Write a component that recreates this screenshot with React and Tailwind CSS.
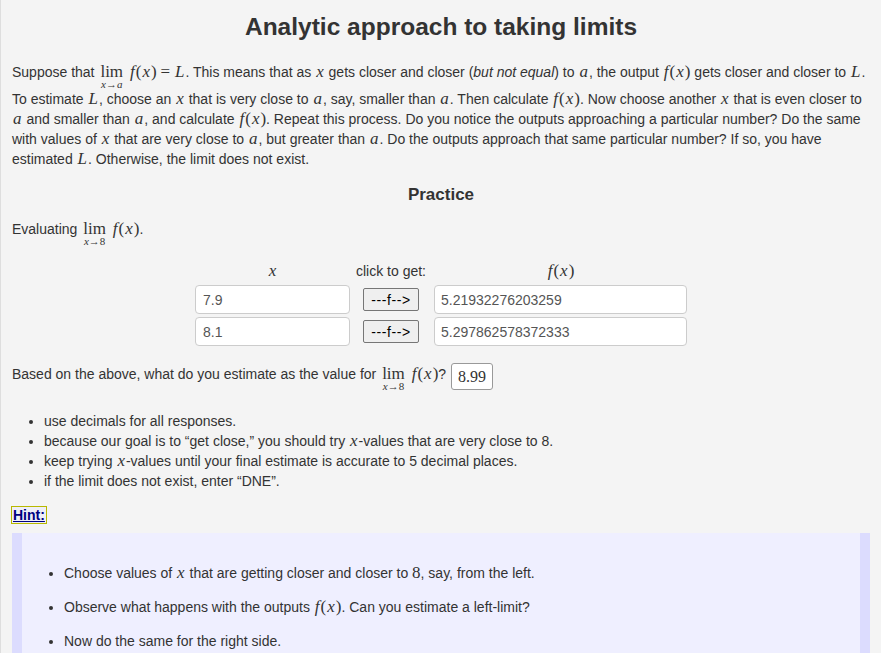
import React from "react";

const mathFont = { fontFamily: '"Liberation Serif", "DejaVu Serif", serif' };

// Italic math variable
const V = ({ children }) => (
  <span className="italic text-[17px] px-[1px]" style={mathFont}>
    {children}
  </span>
);

// Upright math text (numbers, parens, operators)
const M = ({ children }) => (
  <span className="text-[17px]" style={mathFont}>
    {children}
  </span>
);

const Fx = () => (
  <span className="whitespace-nowrap">
    <V>f</V>
    <M>(</M>
    <V>x</V>
    <M>)</M>
  </span>
);

// lim with subscript under it
const Lim = ({ to }) => (
  <span className="inline-flex flex-col items-center align-baseline mx-[2px]" style={mathFont}>
    <span className="text-[17px] leading-[15px]">lim</span>
    <span className="text-[11px] leading-[10px] whitespace-nowrap">
      <span className="italic">x</span>→{to}
    </span>
  </span>
);

const ValueInput = ({ value }) => (
  <div className="w-[155px] h-[29px] flex items-center bg-white border border-[#ccc] rounded-[4px] pl-[7px] text-[#555]">
    {value}
  </div>
);

const OutputInput = ({ value }) => (
  <div className="w-[253px] h-[29px] flex items-center bg-white border border-[#ccc] rounded-[4px] pl-[6px] text-[#555]">
    {value}
  </div>
);

const FButton = () => (
  <div className="w-[76px] flex justify-center">
    <button className="w-[56px] h-[23px] bg-[#efefef] border border-[#767676] rounded-[2px] text-[14px] tracking-[0.6px] text-black leading-none">
      ---f--&gt;
    </button>
  </div>
);

export default function App() {
  const rows = [
    { x: "7.9", fx: "5.21932276203259" },
    { x: "8.1", fx: "5.297862578372333" },
  ];

  return (
    <div
      className="min-h-screen bg-[#f4f4f4] border-l border-[#dedede] px-[11px] text-[14px] leading-[20px] text-[#333]"
      style={{ fontFamily: '"Liberation Sans", Arial, sans-serif' }}
    >
      {/* Title */}
      <h1 className="pt-[11px] text-center font-bold text-[24.5px] leading-[32px] text-[#333]">
        Analytic approach to taking limits
      </h1>

      {/* Intro */}
      <p className="mt-[19px] whitespace-nowrap">
        Suppose that <Lim to={<span className="italic">a</span>} /> <Fx /> <M>=</M> <V>L</V>. This means that as{" "}
        <V>x</V> gets closer and closer (<i>but not equal</i>) to <V>a</V>, the output <Fx /> gets closer and
        closer to <V>L</V>.
        <br />
        To estimate <V>L</V>, choose an <V>x</V> that is very close to <V>a</V>, say, smaller than <V>a</V>. Then
        calculate <Fx />. Now choose another <V>x</V> that is even closer to
        <br />
        <V>a</V> and smaller than <V>a</V>, and calculate <Fx />. Repeat this process. Do you notice the outputs
        approaching a particular number? Do the same
        <br />
        with values of <V>x</V> that are very close to <V>a</V>, but greater than <V>a</V>. Do the outputs approach
        that same particular number? If so, you have
        <br />
        estimated <V>L</V>. Otherwise, the limit does not exist.
      </p>

      {/* Practice */}
      <h2 className="mt-[14px] text-center font-bold text-[17px] leading-[24px]">Practice</h2>

      <p className="mt-[12px]">
        Evaluating <Lim to="8" /> <Fx />.
      </p>

      {/* Table */}
      <div className="mt-[14px] flex flex-col items-center">
        <div className="flex gap-[3px] h-[22px] items-center">
          <div className="w-[155px] text-center">
            <V>x</V>
          </div>
          <div className="w-[76px] text-center">click to get:</div>
          <div className="w-[253px] ml-[2px] text-center">
            <Fx />
          </div>
        </div>
        <div className="flex flex-col gap-[3px] mt-[3px]">
          {rows.map((r) => (
            <div key={r.x} className="flex items-center gap-[3px]">
              <ValueInput value={r.x} />
              <FButton />
              <div className="ml-[2px]">
                <OutputInput value={r.fx} />
              </div>
            </div>
          ))}
        </div>
      </div>

      {/* Question */}
      <p className="mt-[18px] flex items-start">
        <span>
          Based on the above, what do you estimate as the value for <Lim to="8" /> <Fx />?
        </span>
        <span
          className="ml-[5px] mt-[-1px] h-[27px] w-[42px] flex items-center justify-center bg-white border border-[#999] rounded-[3px] text-[16px]"
          style={mathFont}
        >
          8.99
        </span>
      </p>

      <ul className="mt-[20px] pl-[32px] list-disc">
        <li>use decimals for all responses.</li>
        <li>
          because our goal is to “get close,” you should try <V>x</V>-values that are very close to 8.
        </li>
        <li>
          keep trying <V>x</V>-values until your final estimate is accurate to 5 decimal places.
        </li>
        <li>if the limit does not exist, enter “DNE”.</li>
      </ul>

      {/* Hint */}
      <div className="mt-[14px]">
        <a className="inline-block font-bold underline text-[#000080] outline outline-1 outline-[#b8b800] leading-[16px] px-[1px] bg-[#eeeef8]">
          Hint:
        </a>
      </div>

      <div className="mt-[8px] bg-[#efefff] border-x-[10px] border-[#dcdcfe] pt-[30px] pb-[8px]">
        <ul className="pl-[42px] list-disc flex flex-col gap-[14px]">
          <li>
            Choose values of <V>x</V> that are getting closer and closer to <M>8</M>, say, from the left.
          </li>
          <li>
            Observe what happens with the outputs <Fx />. Can you estimate a left-limit?
          </li>
          <li>Now do the same for the right side.</li>
        </ul>
      </div>
    </div>
  );
}
